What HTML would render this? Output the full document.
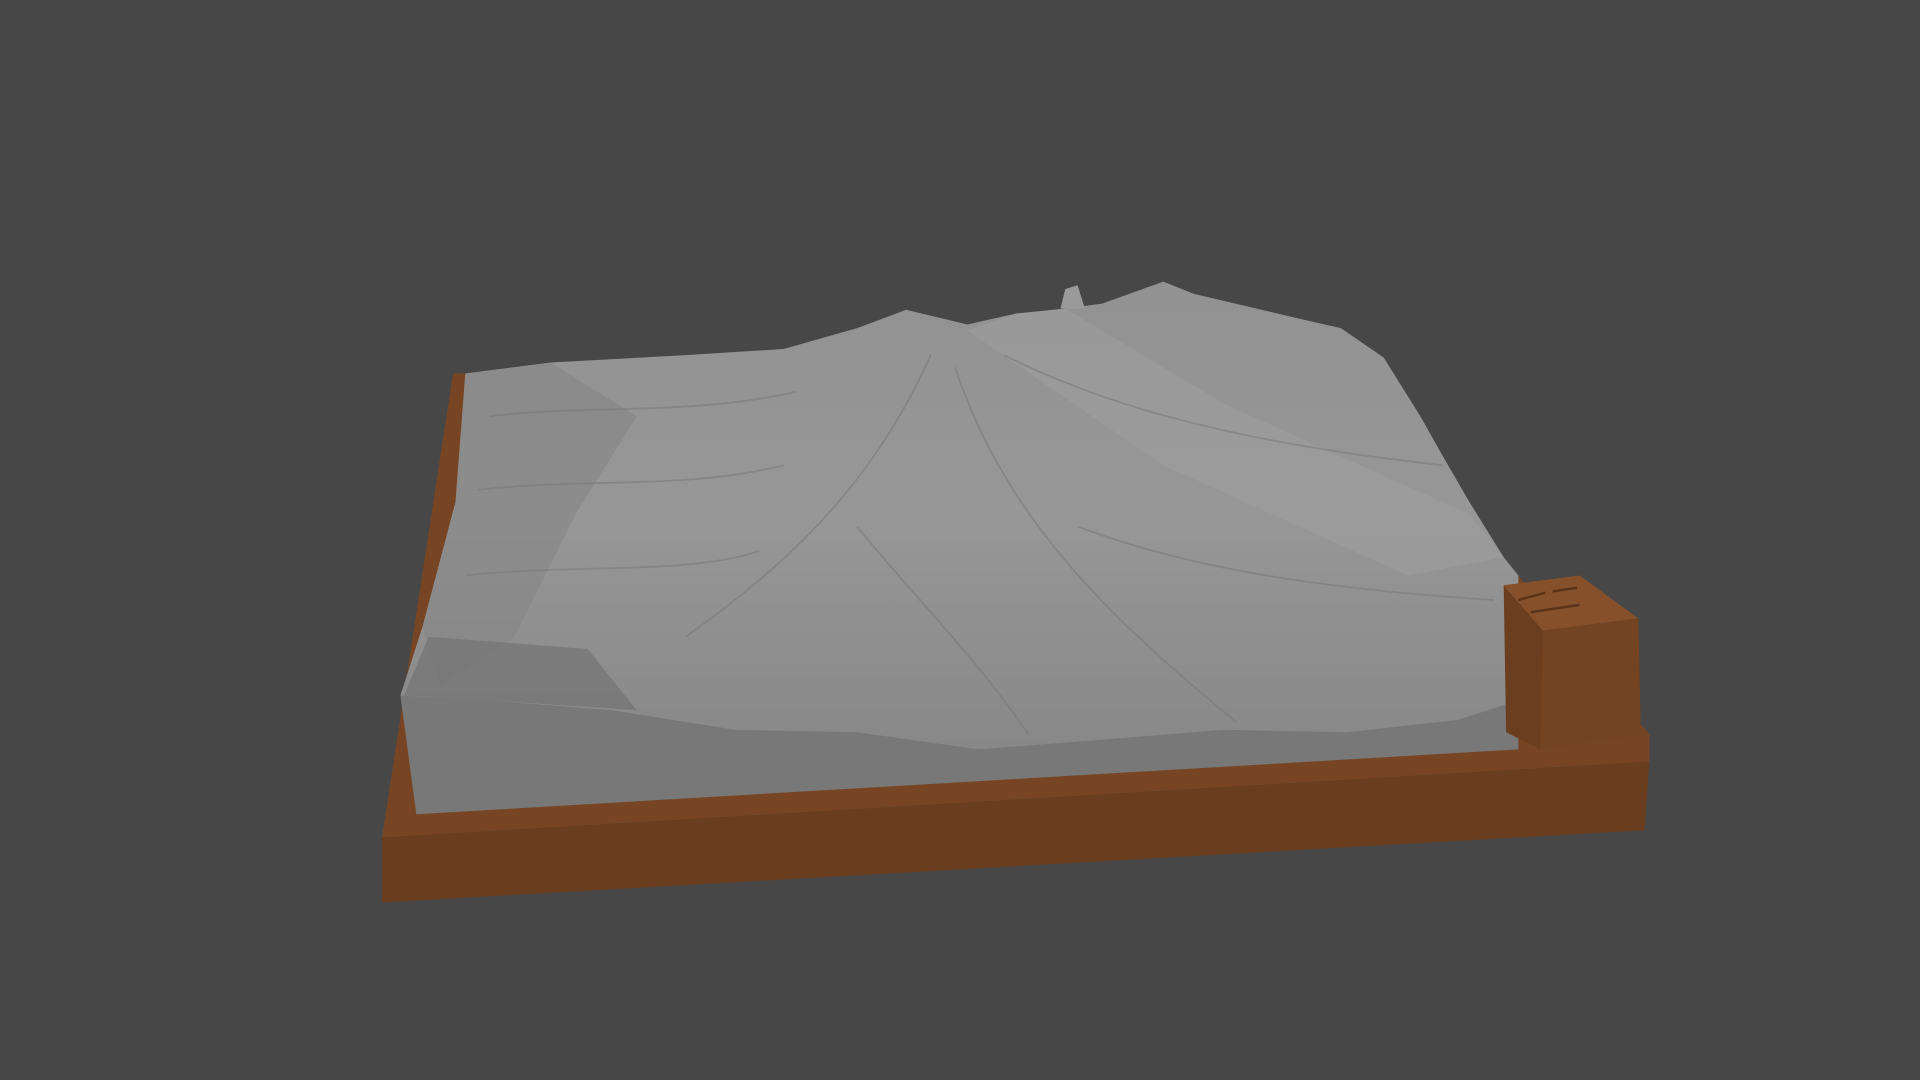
<!DOCTYPE html>
<html><head><meta charset="utf-8"><style>
html,body{margin:0;padding:0;width:1920px;height:1080px;overflow:hidden;background:#474747}
svg{display:block}
</style></head><body>
<svg width="1920" height="1080" viewBox="0 0 1568 882" preserveAspectRatio="none">
<defs>
<linearGradient id="terr" x1="0" y1="0" x2="0" y2="1">
<stop offset="0" stop-color="#929292"/><stop offset="0.5" stop-color="#979797"/><stop offset="1" stop-color="#888888"/>
</linearGradient>
</defs>
<rect width="1568" height="882" fill="#474747"/>
<polygon points="370,305 386,305 1240,470 1347,600 1347,622 312,684" fill="#774523"/>
<polygon points="312,684 1347,622 1343,678 312,737" fill="#693d1e"/>
<polygon points="327,568 1240,572 1240,612 340,665" fill="#787878"/>
<polygon points="327,568 345,512 372,410 380,305 450,296 560,290 640,285 700,268 740,253 790,265 830,256 870,252 900,248 950,230 975,240 1060,260 1095,268 1130,292 1160,340 1178,372 1200,410 1228,455 1240,470 1240,572 1190,588 1100,598 1000,596 800,612 700,598 600,596 500,580 400,572" fill="url(#terr)"/>
<polygon points="345,512 372,410 380,305 450,296 520,340 470,420 420,520 360,560" fill="#868686" opacity="0.6"/>
<polygon points="350,520 480,530 520,580 400,572 330,568" fill="#737373" opacity="0.7"/>
<polygon points="790,270 830,256 870,252 1000,330 1200,420 1228,455 1150,470 950,380" fill="#a0a0a0" opacity="0.5"/>
<g stroke="#777" stroke-width="1.5" fill="none" opacity="0.5">
<path d="M760,290 C720,380 660,450 560,520"/>
<path d="M780,300 C820,420 900,500 1010,590"/>
<path d="M820,290 C900,330 1000,360 1178,380"/>
<path d="M400,340 C480,330 560,340 650,320"/>
<path d="M390,400 C480,390 560,400 640,380"/>
<path d="M380,470 C470,460 560,470 620,450"/>
<path d="M880,430 C960,460 1060,480 1220,490"/>
<path d="M700,430 C740,480 800,540 840,600"/>
</g>
<polygon points="866,252 870,236 880,233 886,252" fill="#9a9a9a"/>
<polygon points="1228,478 1290,470 1338,505 1260,515" fill="#85502a"/>
<polygon points="1228,478 1260,515 1258,612 1230,598" fill="#6b3e1f"/>
<polygon points="1260,515 1338,505 1340,600 1258,612" fill="#744321"/>
<g stroke="#5a3318" stroke-width="2" fill="none">
<path d="M1240,490 L1262,484 M1268,483 L1288,480 M1250,500 L1290,494"/>
</g>
</svg>
</body></html>
